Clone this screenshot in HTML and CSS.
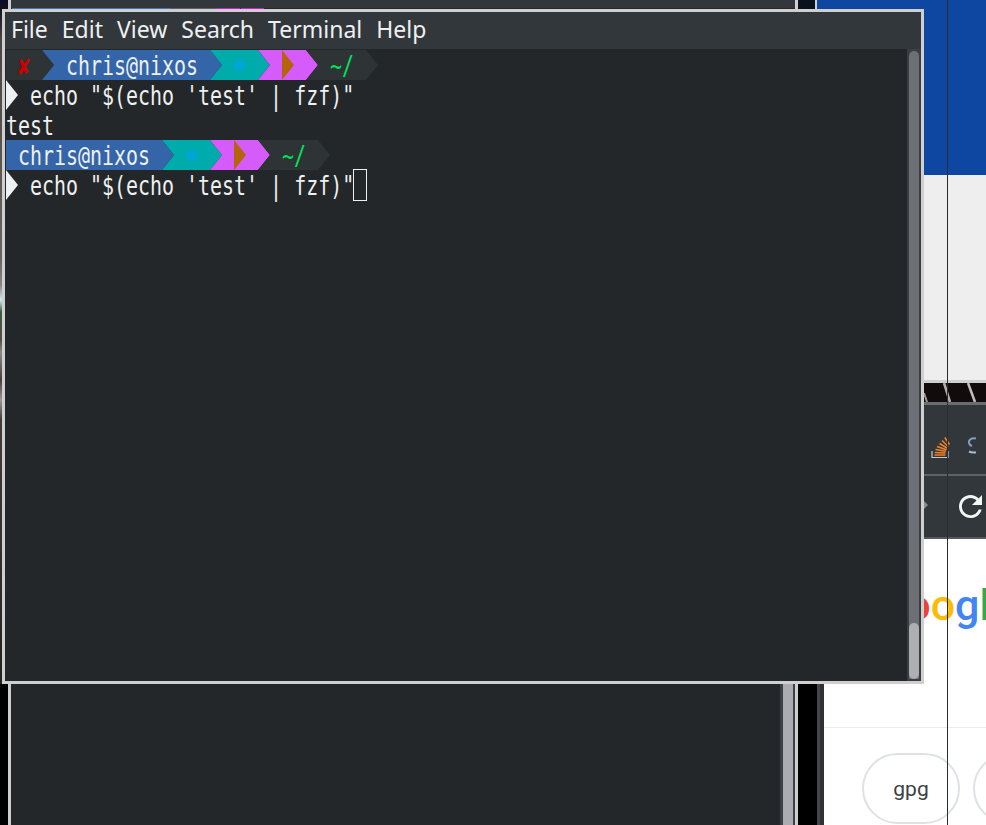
FILE: index.html
```html
<!DOCTYPE html>
<html lang="en">
<head>
<meta charset="utf-8">
<title>Terminal</title>
<link rel="stylesheet" href="styles.css">
</head>
<body>
<div class="desktop">
  <div class="wallpaper"></div>

  <div class="back-term">
    <div class="back-menu"></div>
    <div class="back-prompts"><i class="bp bp-blue"></i><i class="bp bp-grey"></i><i class="bp bp-mag"></i><i class="bp bp-gap"></i><i class="bp bp-mag2"></i></div>
    <div class="back-body"><div class="back-bar"><div class="back-thumb"></div></div></div>
  </div>

  <div class="browser">
    <div class="b-blue"></div>
    <div class="b-grey"></div>
    <svg class="b-photo" width="169" height="25" viewBox="817 380 169 25" aria-hidden="true">
      <rect x="817" y="380" width="169" height="3" fill="#cfcfcf"/>
      <rect x="817" y="383" width="169" height="19" fill="#120b0b"/>
      <path d="M924 393L927 402" stroke="#a8989b" stroke-width="2"/>
      <path d="M944 383L950 402" stroke="#b9adb0" stroke-width="2.500"/>
      <path d="M968 383L975 402" stroke="#c4bcbc" stroke-width="2.500"/>
      <rect x="817" y="402" width="169" height="3" fill="#6b6e71"/>
    </svg>
    <div class="b-tabs">
      <svg class="so-icon" width="22" height="24" viewBox="930 436 22 24" aria-hidden="true">
        <path d="M932 451V457.500H948V451" fill="none" stroke="#c6c9cd" stroke-width="1.200"/>
        <path d="M934.500 455H945.500M934.800 452.400L945.500 453M935.500 449.500L945.800 451.300M937 446.500L946.500 449.800M939.500 443.500L947 448M942 440.500L948.200 446.500M944.800 437.500L949.500 444.500" fill="none" stroke="#f48024" stroke-width="1.500"/>
      </svg>
      <svg class="s-icon" width="9" height="20" viewBox="0 0 9 20" aria-hidden="true">
        <path d="M8 1.500C3 0.500 0.500 3 1 6C1.300 7.500 2.500 8.500 4 9" fill="none" stroke="#7f9fc2" stroke-width="2"/>
        <path d="M1 14.500C3 15.500 5.500 15.800 8 15.300" fill="none" stroke="#a9bdd3" stroke-width="2"/>
      </svg>
    </div>
    <div class="b-toolbar">
      <svg class="chev" width="5" height="8" viewBox="0 0 5 8" aria-hidden="true"><path d="M0 0L4 4L0 8Z" fill="#8a8d90"/></svg>
      <svg class="reload" width="23" height="23" viewBox="4 4 16 16" aria-hidden="true"><path fill="#f4f5f5" d="M17.650 6.350C16.200 4.900 14.210 4 12 4c-4.420 0-7.990 3.580-7.990 8s3.570 8 7.990 8c3.730 0 6.840-2.550 7.730-6h-2.080c-.82 2.330-3.040 4-5.650 4-3.310 0-6-2.690-6-6s2.690-6 6-6c1.660 0 3.140.69 4.220 1.780L13 11h7V4l-2.350 2.350z"/></svg>
    </div>
    <div class="b-page">
      <div class="logo"><span class="l-blue">G</span><span class="l-red">o</span><span class="l-yellow">o</span><span class="l-blue">g</span><span class="l-green">l</span></div>
      <div class="rule"></div>
      <div class="pills"><div class="pill">gpg</div><div class="pill"></div></div>
    </div>
  </div>

  <div class="gap-top"></div>
  <div class="gap-bottom"><i class="gb-black"></i><i class="gb-mid"></i><i class="gb-dark"></i></div>
  <div class="vline"></div>

  <div class="terminal">
    <nav class="menu"><span>File</span><span>Edit</span><span>View</span><span>Search</span><span>Terminal</span><span>Help</span></nav>
    <div class="term-body">
      <div class="screen">
        <div class="row">
          <div class="seg s-dark s-first w-x"><span class="t n1 red">✘</span></div>
          <div class="seg s-blue w-user pad2"><span class="t n11">chris@nixos</span></div>
          <div class="seg s-teal w-5"><i class="dot"></i></div>
          <div class="seg s-mag w-5"><i class="tri"></i></div>
          <div class="seg s-dark w-6 pad2"><span class="t n2 green">~/</span></div>
        </div>
        <div class="row"><i class="caret"></i><span class="t n27 cmd">echo "$(echo 'test' | fzf)"</span></div>
        <div class="row"><span class="t n4">test</span></div>
        <div class="row">
          <div class="seg s-blue s-first w-user2"><span class="t n11">chris@nixos</span></div>
          <div class="seg s-teal w-5"><i class="dot"></i></div>
          <div class="seg s-mag w-5"><i class="tri"></i></div>
          <div class="seg s-dark w-6 pad2"><span class="t n2 green">~/</span></div>
        </div>
        <div class="row"><i class="caret"></i><span class="t n27 cmd">echo "$(echo 'test' | fzf)"</span><i class="cursor"></i></div>
      </div>
      <div class="scrollbar"><div class="trough"><div class="thumb"></div></div></div>
    </div>
  </div>
</div>
</body>
</html>
```

FILE: styles.css
```css
html, body { margin: 0; padding: 0; background: #000; }
body { width: 986px; height: 825px; overflow: hidden; }
.desktop { position: relative; width: 986px; height: 825px; overflow: hidden; background: #000; }
i { display: block; }

/* desktop windows */
.wallpaper {
  position: absolute; left: 0; top: 0; width: 8px; height: 684px;
  background: linear-gradient(180deg, #0b0d24 0, #16131f 9px, #4a4442 40px, #6a6460 260px, #8a8580 285px, #cfe6ee 300px, #3f5a3c 312px, #5a4a44 340px, #8a8a88 352px, #4a3c38 380px, #9a9694 400px, #463a36 420px, #222 684px);
}
.back-term {
  position: absolute; left: 8px; top: 0; width: 790px; height: 825px; box-sizing: border-box;
  border-left: 3px solid #cfcfcf; border-right: 3px solid #cfcfcf;
  display: flex; flex-direction: column; background: #232729;
}
.back-menu { height: 8px; background: #32373b; }
.back-prompts { height: 1px; display: flex; background: #232729; }
.bp-blue { margin-left: 1px; width: 158px; background: #3a78c4; }
.bp-grey { width: 46px; background: #5f5f6c; }
.bp-mag { width: 24px; background: #e010e0; }
.bp-gap { width: 1px; }
.bp-mag2 { width: 23px; background: #e010e0; }
.back-body { flex: 1; display: flex; justify-content: flex-end; }
.back-bar { width: 15px; background: #3d4145; padding: 0 2px 0 3px; box-sizing: border-box; }
.back-thumb { height: 100%; background: #abacb0; }

.gap-top { position: absolute; left: 798px; top: 0; width: 17px; height: 9px; background: #0a1220; border-right: 2px solid #cfcfcf; }
.gap-bottom { position: absolute; left: 798px; top: 684px; width: 26px; height: 141px; display: flex; }
.gb-black { width: 19px; background: #000; }
.gb-mid { width: 3px; background: #43474b; }
.gb-dark { width: 4px; background: #2f3337; }

.browser {
  position: absolute; left: 817px; top: 0; width: 169px; height: 825px;
  display: flex; flex-direction: column; background: #fff; overflow: hidden;
}
.b-blue { height: 175px; background: #0d47a1; flex: none; }
.b-grey { height: 205px; background: #eeeeee; flex: none; }
.b-photo { display: block; flex: none; }
.b-tabs { flex: none; background: #32373b; border-bottom: 2px solid #5e6266; display: flex; align-items: flex-start; padding: 31px 0 0 113px; height: 38px; }
.so-icon { display: block; }
.s-icon { display: block; margin: 1px 0 0 16px; }
.b-toolbar { height: 61px; flex: none; background: #32373b; border-bottom: 2px solid #55595d; display: flex; align-items: flex-start; }
.chev { margin: 25px 0 0 107px; }
.reload { margin: 19px 0 0 30px; }
.b-page { flex: 1; display: flex; flex-direction: column; background: #fff; position: relative; }
.logo {
  height: 188px; box-sizing: border-box; padding: 36px 0 0 60px; white-space: nowrap;
  font: 500 43px/60px Roboto, sans-serif;
}
.l-blue { color: #4285f4; }
.l-red { color: #ea4335; }
.l-yellow { color: #fbbc05; }
.l-green { color: #34a853; }
.rule { height: 1px; background: #e8eaed; margin-left: 7px; flex: none; }
.pills { display: flex; gap: 13px; padding: 25px 0 0 45px; width: 300px; box-sizing: border-box; }
.pill {
  flex: none; width: 98px; height: 71px; box-sizing: border-box; border: 2px solid #dfe1e5; border-radius: 36px;
  display: flex; align-items: center; justify-content: center;
  font: 21px Roboto, "Liberation Sans", sans-serif; color: #3c4043;
}
.vline { position: absolute; left: 947px; top: 0; width: 1px; height: 825px; background: #2a2d30; }

/* terminal */
.terminal {
  position: absolute; left: 2px; top: 9px; width: 922px; height: 675px; box-sizing: border-box;
  border: 3px solid #cfcfcf; background: #232729; display: flex; flex-direction: column;
}
.menu {
  height: 37px; flex: none; background: #32373b; display: flex; gap: 14px; padding: 0 0 3px 6px; box-sizing: border-box;
  align-items: center; font: 23px "Noto Sans", sans-serif; color: #eff0f1;
}
.term-body { flex: 1; display: flex; min-height: 0; }
.screen { flex: 1; padding: 1px 0 0 1px; box-sizing: border-box; color: #eff0f1; }
.row { height: 30px; display: flex; align-items: center; }
.t {
  display: block; flex: none; height: 30px; white-space: pre; transform: translateY(1px) scaleX(0.767); transform-origin: 0 50%;
  font: 26px/30px "DejaVu Sans Mono", monospace;
}
.n1 { width: 12px; } .n2 { width: 24px; } .n4 { width: 48px; } .n11 { width: 132px; } .n27 { width: 324px; }
.red { color: #cc0000; font-weight: 700; }
.green { color: #00e45c; }
.cmd { margin-left: 12px; }
.caret { width: 12px; height: 30px; flex: none; background: #eff0f1; clip-path: polygon(0 0, 100% 50%, 0 100%); }
.cursor { width: 14px; height: 32px; flex: none; box-sizing: border-box; border: 1px solid #eff0f1; margin-left: -1px; }

.seg {
  height: 30px; flex: none; box-sizing: border-box; margin-right: -12px; display: flex; align-items: center;
  clip-path: polygon(0 0, calc(100% - 12px) 0, 100% 50%, calc(100% - 12px) 100%, 0 100%, 12px 50%);
}
.s-first { clip-path: polygon(0 0, calc(100% - 12px) 0, 100% 50%, calc(100% - 12px) 100%, 0 100%); padding-left: 12px; }
.pad2 { padding-left: 24px; }
.w-x { width: 48px; }
.w-user { width: 180px; }
.w-user2 { width: 168px; }
.w-5 { width: 60px; padding-left: 24px; }
.w-6 { width: 72px; }
.s-dark { background: #2e3336; }
.s-blue { background: #3465a8; }
.s-teal { background: #00abab; }
.s-mag { background: #d55cfa; }
.dot { width: 11px; height: 11px; border-radius: 50%; background: #00a6d6; }
.tri { width: 12px; height: 30px; background: #b5640a; clip-path: polygon(0 0, 100% 50%, 0 100%); }

.scrollbar { width: 14px; flex: none; box-sizing: border-box; padding: 2px; background: #3a3e42; }
.trough { height: 100%; border-radius: 5px 5px 0 0; background: #6c6f73; display: flex; flex-direction: column; justify-content: flex-end; }
.thumb { height: 56px; border-radius: 5px; background: #aeafb3; }
```
